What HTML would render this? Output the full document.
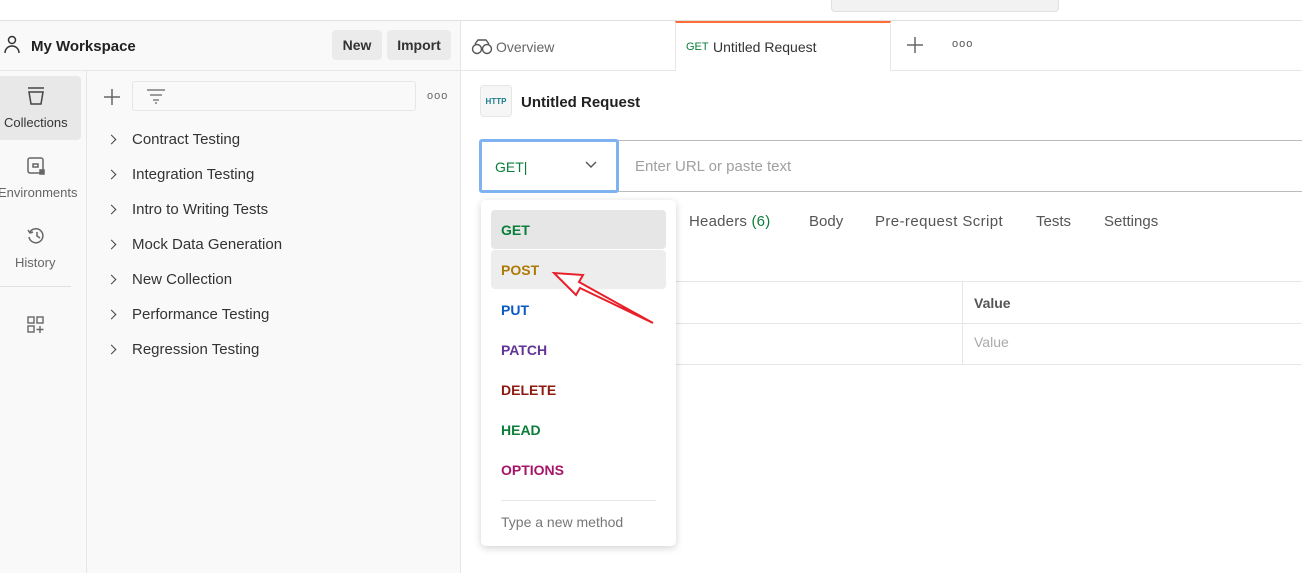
<!DOCTYPE html>
<html><head><style>
*{box-sizing:border-box;margin:0;padding:0}
body{width:1302px;height:573px;overflow:hidden;font-family:"Liberation Sans",sans-serif;background:#fff;position:relative;color:#212121}
.a{position:absolute}
.t{margin-top:1px}
.left{left:0;top:21px;width:461px;height:552px;background:#f9f9f9;border-right:1px solid #e6e6e6}
.tree div{position:absolute;left:132px;font-size:15px;color:#333;margin-top:1px}
.chev{position:absolute;left:108px;width:7px;height:7px;border-right:1.5px solid #444;border-top:1.5px solid #444;transform:rotate(45deg)}
.m{position:absolute;left:501px;font-size:14px;font-weight:bold;margin-top:1px}
</style></head><body>
<div class="a" style="left:0;top:20px;width:1302px;height:1px;background:#e0e0e0"></div>
<div class="a" style="left:831px;top:0;width:228px;height:12px;background:#f2f2f2;border:1px solid #e0e0e0;border-top:none;border-radius:0 0 4px 4px"></div>
<div class="a left"></div>
<div class="a" style="left:0;top:70px;width:461px;height:1px;background:#e6e6e6"></div>
<div class="a" style="left:86px;top:71px;width:1px;height:502px;background:#e6e6e6"></div>
<svg class="a" style="left:3px;top:35px" width="18" height="20" viewBox="0 0 18 20" fill="none" stroke="#333" stroke-width="1.5"><circle cx="9" cy="5" r="3.5"/><path d="M2 18c0-4 3-7 7-7s7 3 7 7"/></svg>
<div class="a" style="left:31px;top:38px;font-size:15px;font-weight:bold">My Workspace</div>
<div class="a" style="left:332px;top:30px;width:50px;height:30px;background:#ebebeb;border-radius:4px;font-size:14px;font-weight:bold;text-align:center;line-height:30px;color:#333">New</div>
<div class="a" style="left:387px;top:30px;width:64px;height:30px;background:#ebebeb;border-radius:4px;font-size:14px;font-weight:bold;text-align:center;line-height:30px;color:#333">Import</div>
<div class="a" style="left:0;top:76px;width:81px;height:64px;background:#e8e8e8;border-radius:0 4px 4px 0"></div>
<svg class="a" style="left:26px;top:86px" width="20" height="20" viewBox="0 0 20 20" fill="none" stroke="#444" stroke-width="1.5"><path d="M2 2h16M3 6h14l-2 12H5z"/></svg>
<div class="a" style="left:4px;top:115px;font-size:13px;color:#333">Collections</div>
<svg class="a" style="left:26px;top:156px" width="20" height="20" viewBox="0 0 20 20" fill="none" stroke="#666" stroke-width="1.5"><rect x="2" y="2" width="15" height="15" rx="2"/><rect x="7" y="8" width="5" height="3"/><rect x="14" y="14" width="4" height="4" fill="#666"/></svg>
<div class="a" style="left:-2px;top:185px;font-size:13px;color:#666">Environments</div>
<svg class="a" style="left:26px;top:226px" width="20" height="20" viewBox="0 0 20 20" fill="none" stroke="#666" stroke-width="1.5"><path d="M4 6a7 7 0 1 1-1 5"/><path d="M2 4l2 3 3-1"/><path d="M11 6v4l3 2"/></svg>
<div class="a" style="left:15px;top:255px;font-size:13px;color:#666">History</div>
<div class="a" style="left:0;top:286px;width:71px;height:1px;background:#e0e0e0"></div>
<svg class="a" style="left:26px;top:315px" width="20" height="20" viewBox="0 0 20 20" fill="none" stroke="#666" stroke-width="1.4"><rect x="2" y="2" width="6" height="6"/><rect x="11" y="2" width="6" height="6"/><rect x="2" y="11" width="6" height="6"/><path d="M14 11v7M10.5 14.5h7"/></svg>
<svg class="a" style="left:103px;top:88px" width="18" height="18" stroke="#666" stroke-width="1.5"><path d="M9 1v16M1 9h16"/></svg>
<div class="a" style="left:132px;top:81px;width:284px;height:30px;border:1px solid #e6e6e6;border-radius:3px"></div>
<svg class="a" style="left:146px;top:88px" width="20" height="16" stroke="#666" stroke-width="1.3"><path d="M1 2h18M4 7h12M7 12h6M9 15h2"/></svg>
<div class="a" style="left:427px;top:90px;font-size:11px;color:#666;letter-spacing:1px">ooo</div>
<div class="tree">
<div style="top:130px">Contract Testing</div><div style="top:165px">Integration Testing</div><div style="top:200px">Intro to Writing Tests</div><div style="top:235px">Mock Data Generation</div><div style="top:270px">New Collection</div><div style="top:305px">Performance Testing</div><div style="top:340px">Regression Testing</div>
</div>
<div class="chev" style="top:136px"></div><div class="chev" style="top:171px"></div><div class="chev" style="top:206px"></div><div class="chev" style="top:241px"></div><div class="chev" style="top:276px"></div><div class="chev" style="top:311px"></div><div class="chev" style="top:346px"></div>
<div class="a" style="left:461px;top:70px;width:841px;height:1px;background:#e6e6e6"></div>
<div class="a" style="left:675px;top:21px;width:216px;height:50px;background:#fff;border-left:1px solid #e6e6e6;border-right:1px solid #e6e6e6;border-top:2px solid #ff6c37"></div>
<svg class="a" style="left:471px;top:38px" width="22" height="18" fill="none" stroke="#555" stroke-width="1.4"><circle cx="6" cy="11" r="4.5"/><circle cx="16" cy="11" r="4.5"/><path d="M4 6l3-4h8l3 4"/></svg>
<div class="a" style="left:496px;top:39px;font-size:14px;color:#666">Overview</div>
<div class="a" style="left:686px;top:41px;font-size:11px;color:#0a7e3a">GET</div>
<div class="a" style="left:713px;top:39px;font-size:14px;color:#333">Untitled Request</div>
<svg class="a" style="left:906px;top:36px" width="18" height="18" stroke="#666" stroke-width="1.5"><path d="M9 1v16M1 9h16"/></svg>
<div class="a" style="left:952px;top:38px;font-size:11px;color:#555;letter-spacing:1px">ooo</div>
<div class="a" style="left:480px;top:85px;width:32px;height:32px;border:1px solid #e6e6e6;border-radius:4px;background:#f6f6f6;font-size:8px;color:#1a7d8c;text-align:center;line-height:32px;font-weight:bold">HTTP</div>
<div class="a" style="left:521px;top:94px;font-size:15px;font-weight:bold">Untitled Request</div>
<div class="a" style="left:617px;top:140px;width:685px;height:52px;border-top:1px solid #bbb;border-bottom:1px solid #bbb"></div>
<div class="a" style="left:479px;top:139px;width:140px;height:54px;border:3px solid #7eb2f0;border-radius:3px"></div>
<div class="a" style="left:495px;top:159px;font-size:14px;color:#0a7e3a">GET|</div>
<svg class="a" style="left:584px;top:160px" width="14" height="10" fill="none" stroke="#555" stroke-width="1.4"><path d="M2 2l5 5 5-5"/></svg>
<div class="a" style="left:635px;top:158px;font-size:15px;color:#a0a0a0">Enter URL or paste text</div>
<div class="a" style="left:689px;top:213px;font-size:15px;color:#555;letter-spacing:.2px">Headers <span style="color:#0a7e3a">(6)</span></div>
<div class="a" style="left:809px;top:213px;font-size:15px;color:#555">Body</div>
<div class="a" style="left:875px;top:213px;font-size:15px;color:#555;letter-spacing:.4px">Pre-request Script</div>
<div class="a" style="left:1036px;top:213px;font-size:15px;color:#555">Tests</div>
<div class="a" style="left:1104px;top:213px;font-size:15px;color:#555">Settings</div>
<div class="a" style="left:660px;top:281px;width:642px;height:1px;background:#e6e6e6"></div>
<div class="a" style="left:660px;top:323px;width:642px;height:1px;background:#e6e6e6"></div>
<div class="a" style="left:660px;top:364px;width:642px;height:1px;background:#e6e6e6"></div>
<div class="a" style="left:962px;top:282px;width:1px;height:82px;background:#e6e6e6"></div>
<div class="a" style="left:974px;top:295px;font-size:14px;font-weight:bold;color:#555">Value</div>
<div class="a" style="left:974px;top:334px;font-size:14px;color:#aaa">Value</div>
<div class="a" style="left:481px;top:200px;width:195px;height:346px;background:#fff;border-radius:5px;box-shadow:0 2px 8px rgba(0,0,0,.18)"></div>
<div class="a" style="left:491px;top:210px;width:175px;height:39px;background:#e6e6e6;border-radius:4px"></div>
<div class="a" style="left:491px;top:250px;width:175px;height:39px;background:#ededed;border-radius:4px"></div>
<div class="m" style="top:221px;color:#0a7e3a">GET</div>
<div class="m" style="top:261px;color:#ad7a03">POST</div>
<div class="m" style="top:301px;color:#0b5ac4">PUT</div>
<div class="m" style="top:341px;color:#623497">PATCH</div>
<div class="m" style="top:381px;color:#8e1a10">DELETE</div>
<div class="m" style="top:421px;color:#0a7e3a">HEAD</div>
<div class="m" style="top:461px;color:#a61468">OPTIONS</div>
<div class="a" style="left:501px;top:500px;width:155px;height:1px;background:#e6e6e6"></div>
<div class="a" style="left:501px;top:514px;font-size:14px;color:#777">Type a new method</div>
<svg class="a" style="left:550px;top:268px" width="110" height="60" fill="none" stroke="#e8202a" stroke-width="2"><path d="M103 55L30 20 26 27 4 5 33 7 29 14z" fill="#fff"/></svg>
</body></html>
